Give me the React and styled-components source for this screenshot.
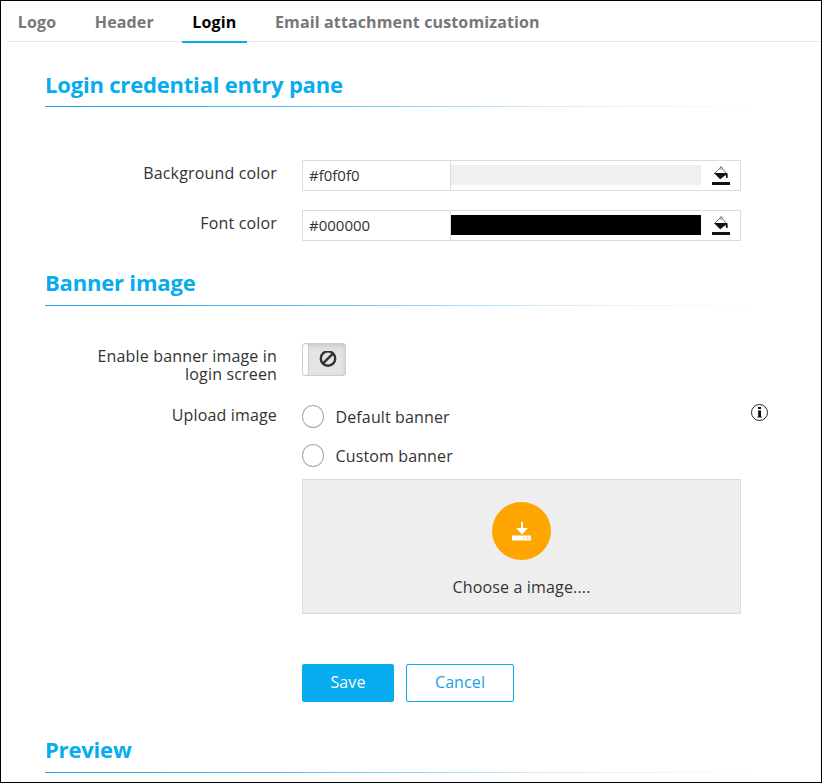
import React from 'react'
import styled, { createGlobalStyle, css } from 'styled-components'

const GlobalStyle = createGlobalStyle`
  * {
    box-sizing: border-box;
  }
  body {
    margin: 0;
    background: #fff;
    color: #333;
    font-family: 'Open Sans', 'Noto Sans', sans-serif;
    font-size: 16px;
  }
`
const Page = styled.div`
  width: 822px;
  height: 783px;
  border: 1px solid #000;
  overflow: hidden;
`
const TabBar = styled.nav`
  display: flex;
  gap: 17.6px;
  height: 41px;
  margin-left: 6px;
  border-bottom: 1px solid #e8e8e8;
`
const Tab = styled.a`
  height: 42px;
  padding: 0 10.2px 0 10.8px;
  line-height: 42px;
  font-weight: 700;
  letter-spacing: 0.13px;
  white-space: nowrap;
  color: ${({ $active }) => ($active ? '#000' : '#777')};
  border-bottom: 2px solid ${({ $active }) => ($active ? '#06acee' : 'transparent')};
`
const Content = styled.main`
  padding-left: 44px;
`
const Heading = styled.h2`
  width: 720px;
  height: 41px;
  margin: ${({ $top }) => $top}px 0 0;
  line-height: ${({ $line = 34 }) => $line}px;
  font-size: 22px;
  font-weight: 700;
  letter-spacing: -0.19px;
  color: #06acee;
  background: linear-gradient(to right, #1a9fe8, #5cbcf2 35%, #d4eefc 70%, #fff) bottom / 100% 1px
    no-repeat;
`
const Row = styled.div`
  display: flex;
  align-items: flex-start;
  margin-top: ${({ $top }) => $top}px;
`
const Label = styled.div`
  width: 232px;
  margin-right: 25px;
  padding: ${({ $offset = 0 }) => $offset}px 0 0 40px;
  line-height: 18px;
  letter-spacing: 0.16px;
  text-align: right;
`
const ColorField = styled.div`
  display: flex;
  align-items: flex-start;
  width: 439px;
  height: 31px;
  border: 1px solid #dcdcdc;
`
const ColorInput = styled.div`
  width: 148px;
  height: 29px;
  padding-left: 6px;
  line-height: 28px;
  font-size: 15px;
  border-right: 1px solid #dcdcdc;
`
const Swatch = styled.div`
  width: 250px;
  height: 20px;
  margin-top: 4px;
  background: ${({ $color }) => $color};
`
const BucketIcon = styled.svg`
  display: block;
  margin: 4px 0 0 11px;
`
const Toggle = styled.div`
  display: flex;
  align-items: center;
  width: 44px;
  height: 33px;
  border: 1px solid #ccc;
  border-radius: 3px;
  background: #e4e4e4;
  box-shadow: inset 0 2px 5px rgba(0, 0, 0, 0.12);
`
const Knob = styled.span`
  width: 6px;
  height: 31px;
  margin-right: 10px;
  border-right: 1px solid #ccc;
  border-radius: 3px;
  background: #fff;
`
const Options = styled.div`
  display: flex;
  flex-direction: column;
  gap: 16px;
  width: 439px;
`
const Option = styled.div`
  display: flex;
  align-items: center;
  gap: 11.5px;
  height: 23px;
  letter-spacing: 0.13px;
`
const Radio = styled.span`
  width: 22px;
  height: 23px;
  border: 1px solid #aaa;
  border-radius: 50%;
`
const InfoIcon = styled.svg`
  margin-left: 9px;
  margin-top: -2px;
`
const UploadBox = styled.div`
  display: flex;
  flex-direction: column;
  align-items: center;
  width: 439px;
  height: 135px;
  margin: 12px 0 0 257px;
  padding-top: 22px;
  line-height: 22px;
  letter-spacing: 0.16px;
  border: 1px solid #dcdcdc;
  background: #eee;
`
const UploadCircle = styled.div`
  display: flex;
  align-items: center;
  justify-content: center;
  width: 59px;
  height: 58px;
  margin-bottom: 16px;
  border-radius: 50%;
  background: #ffa500;
`
const Actions = styled.div`
  display: flex;
  gap: 12px;
  margin: 50px 0 0 257px;
`
const Button = styled.button`
  width: ${({ $width }) => $width}px;
  height: 38px;
  padding: 0 0 2px;
  border: 1px solid #06acee;
  border-radius: 2px;
  background: #fff;
  color: #1a9fe0;
  font: inherit;
  letter-spacing: 0.1px;
  ${({ $primary }) =>
    $primary &&
    css`
      background: #06acee;
      color: #fff;
    `}
`

const Bucket = () => (
  <BucketIcon width="18" height="21" viewBox="0 0 18 21">
    <path d="M2.5 8.5 9 2l5 6" fill="none" stroke="#777" strokeWidth="1" />
    <path d="M8.2 5V2.5Q9 .3 10 2V5" fill="none" stroke="#888" strokeWidth=".8" />
    <path d="M2 8h13.3q.7 2 .3 5h-1.4l-.6-3-5.4 4.2Z" fill="#111" />
    <path d="M0 17h18v3H0z" fill="#111" />
  </BucketIcon>
)

const ColorPicker = ({ value }) => (
  <ColorField>
    <ColorInput>{value}</ColorInput>
    <Swatch $color={value} />
    <Bucket />
  </ColorField>
)

const BanIcon = () => (
  <svg width="18" height="18" viewBox="0 0 18 18" fill="none" stroke="#333" strokeWidth="2.4">
    <circle cx="9" cy="7.5" r="7.2" />
    <path d="m4.3 12.2 9.4-9.4" />
  </svg>
)

const DownloadIcon = () => (
  <svg width="19" height="19" viewBox="0 0 19 19" fill="#fff">
    <path d="M9 0h2v6h5l-6 6.5-6-6.5h5z" />
    <path d="M0 13.5h19v5H0zM11 15.5v1h1.3v-1zm4 0v1h1.3v-1z" fillRule="evenodd" />
  </svg>
)

const tabs = ['Logo', 'Header', 'Login', 'Email attachment customization']

const App = () => {
  return (
    <>
      <GlobalStyle />
      <Page>
        <TabBar>
          {tabs.map((tab) => (
            <Tab key={tab} $active={tab === 'Login'}>
              {tab}
            </Tab>
          ))}
        </TabBar>
        <Content>
          <Heading $top={24} $line={36}>
            Login credential entry pane
          </Heading>
          <Row $top={53}>
            <Label $offset={4}>Background color</Label>
            <ColorPicker value="#f0f0f0" />
          </Row>
          <Row $top={19}>
            <Label $offset={4}>Font color</Label>
            <ColorPicker value="#000000" />
          </Row>
          <Heading $top={24}>Banner image</Heading>
          <Row $top={37}>
            <Label $offset={4}>Enable banner image in login screen</Label>
            <Toggle>
              <Knob />
              <BanIcon />
            </Toggle>
          </Row>
          <Row $top={22}>
            <Label $offset={1}>Upload image</Label>
            <Options>
              <Option>
                <Radio />
                Default banner
              </Option>
              <Option>
                <Radio />
                Custom banner
              </Option>
            </Options>
            <InfoIcon width="18" height="18" viewBox="0 0 18 18">
              <circle cx="9.5" cy="9.5" r="8" fill="none" stroke="#222" />
              <path d="M8 4h3v2H8zM8 7.5h3v6h.7v1H7.5v-1h.7v-5H8z" fill="#100010" />
            </InfoIcon>
          </Row>
          <UploadBox>
            <UploadCircle>
              <DownloadIcon />
            </UploadCircle>
            Choose a image....
          </UploadBox>
          <Actions>
            <Button $primary $width={92}>
              Save
            </Button>
            <Button $width={108}>Cancel</Button>
          </Actions>
          <Heading $top={30}>Preview</Heading>
        </Content>
      </Page>
    </>
  )
}

export default App
